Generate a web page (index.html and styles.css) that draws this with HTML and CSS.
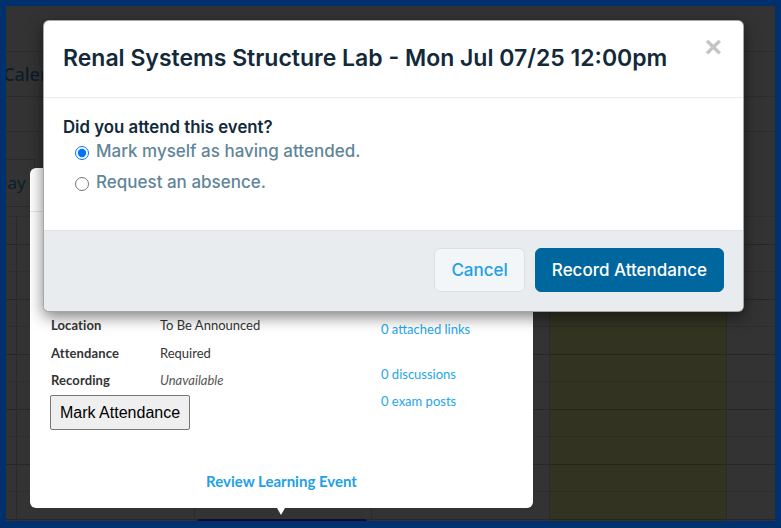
FILE: index.html
```html
<!DOCTYPE html>
<html lang="en">
<head>
    <meta charset="UTF-8">
    <meta name="viewport" content="width=device-width, initial-scale=1.0">
    <title>Calendar - Record Attendance</title>
    <link rel="stylesheet" href="styles.css">
</head>
<body>

<div class="page">
    <div class="cal">
        <div class="cal-nav"></div>
        <div class="cal-title"><h2>Calendar</h2></div>
        <div class="cal-sub"></div>
        <div class="cal-toolbar"><span class="view-btn">Day</span></div>
        <div class="cal-grid">
            <div class="col gutter"></div>
            <div class="col"></div>
            <div class="col"><div class="event"></div></div>
            <div class="col"></div>
            <div class="col today"></div>
            <div class="col"></div>
        </div>
    </div>

    <div class="popover">
        <div class="popover-title"></div>
        <div class="popover-body">
            <div class="details">
                <div class="info">
                    <span class="label">Course</span><span>Renal Systems</span>
                    <span class="label">Date</span><span>Mon Jul 07/25</span>
                    <span class="label">Time</span><span>12:00pm - 2:00pm</span>
                    <span class="label">Location</span><span>To Be Announced</span>
                    <span class="label">Attendance</span><span>Required</span>
                    <span class="label">Recording</span><span class="muted">Unavailable</span>
                </div>
                <button type="button" class="mark-btn">Mark Attendance</button>
            </div>
            <div class="links">
                <a href="#">0 resources</a>
                <a href="#">0 slides</a>
                <a href="#">0 attached files</a>
                <a href="#">0 attached links</a>
                <a href="#" class="gap">0 discussions</a>
                <a href="#">0 exam posts</a>
            </div>
        </div>
        <div class="popover-footer"><a href="#">Review Learning Event</a></div>
    </div>

    <div class="modal">
        <div class="modal-header">
            <h3>Renal Systems Structure Lab - Mon Jul 07/25 12:00pm</h3>
            <span class="close">&times;</span>
        </div>
        <div class="modal-body">
            <p class="question">Did you attend this event?</p>
            <label class="option"><input type="radio" name="attend" checked> Mark myself as having attended.</label>
            <label class="option"><input type="radio" name="attend"> Request an absence.</label>
        </div>
        <div class="modal-footer">
            <button type="button" class="btn btn-cancel">Cancel</button>
            <button type="button" class="btn btn-primary">Record Attendance</button>
        </div>
    </div>
</div>

</body>
</html>
```

FILE: styles.css
```css
html, body {
    margin: 0;
    height: 528px;
}
body {
    background-color: #00306e;
    padding: 6px 6px 7px 6px;
    box-sizing: border-box;
    font-family: Lato, sans-serif;
}
.page {
    position: relative;
    height: 515px;
    background-color: #333;
    overflow: hidden;
}

/* calendar behind the backdrop */
.cal-nav {
    height: 45px;
    border-bottom: 1px solid #2c2c2c;
}
.cal-title {
    height: 44px;
    border-bottom: 1px solid #2c2c2c;
    display: flex;
    align-items: center;
}
.cal-title h2 {
    margin: 0 0 0 -3px;
    font-family: "Noto Sans", sans-serif;
    font-size: 18px;
    font-weight: 500;
    color: #0b1d2a;
}
.cal-sub {
    height: 34px;
    border-bottom: 1px solid #2c2c2c;
}
.cal-toolbar {
    height: 84px;
    padding-top: 27px;
    box-sizing: border-box;
}
.view-btn {
    display: inline-block;
    margin-left: -16px;
    padding: 0 8px 0 4px;
    height: 46px;
    line-height: 46px;
    border: 1px solid #2a2a2a;
    font-family: "Noto Sans", sans-serif;
    font-size: 17px;
    color: #0b1d2a;
}
.cal-grid {
    display: grid;
    grid-template-columns: 10px repeat(4, 177.5px) 1fr;
    height: 320px;
}
.col {
    position: relative;
    border-left: 1px solid #2a2a2a;
    background-image: repeating-linear-gradient(to bottom,
        #2e2e2e 0, #2e2e2e 1px, transparent 1px, transparent 27.5px,
        #272727 27.5px, #272727 28.5px, transparent 28.5px, transparent 55px);
}
.col.gutter {
    border-left: none;
}
.col.today {
    background-color: #333322;
    background-image: repeating-linear-gradient(to bottom,
        #2d2d1f 0, #2d2d1f 1px, transparent 1px, transparent 27.5px,
        #26261a 27.5px, #26261a 28.5px, transparent 28.5px, transparent 55px);
}
.event {
    position: absolute;
    top: 303px;
    left: 2px;
    right: 4px;
    height: 40px;
    background-color: #0f0b33;
    border-radius: 3px;
}

/* event popover */
.popover {
    position: absolute;
    left: 24px;
    top: 162px;
    width: 503px;
    background-color: #fff;
    border-radius: 6px;
    color: #333;
    font-size: 13px;
}
.popover::after {
    content: "";
    position: absolute;
    left: 247px;
    bottom: -7px;
    border-left: 4px solid transparent;
    border-right: 4px solid transparent;
    border-top: 7px solid #fff;
}
.popover-title {
    height: 43px;
    border-bottom: 1px solid #e6e6e6;
}
.popover-body {
    display: grid;
    grid-template-columns: 330px 1fr;
    padding: 17px 21px 0 21px;
}
.info {
    display: grid;
    grid-template-columns: 109px 1fr;
    grid-auto-rows: 27.5px;
    align-items: center;
}
.info .label {
    font-weight: bold;
    letter-spacing: 0.1px;
}
.info .muted {
    font-style: italic;
    color: #555;
}
.mark-btn {
    margin: 1px 0 0 -1px;
    height: 35px;
    padding: 0 9px;
    font-family: Arial, "Liberation Sans", sans-serif;
    font-size: 16px;
    color: #000;
    background-color: #efefef;
    border: 1px solid #767676;
    border-radius: 2px;
}
.links {
    display: flex;
    flex-direction: column;
    align-items: flex-start;
    margin-top: 6px;
}
.links a {
    height: 27px;
    line-height: 27px;
    color: #22a6ea;
    text-decoration: none;
}
.links a.gap {
    margin-top: 18px;
}
.popover-footer {
    text-align: center;
    padding: 41px 0 16px 0;
    line-height: 20px;
}
.popover-footer a {
    color: #1da1e6;
    font-weight: bold;
    font-size: 15px;
    text-decoration: none;
}

/* attendance modal */
.modal {
    position: absolute;
    left: 37px;
    top: 14px;
    width: 701px;
    box-sizing: border-box;
    background-color: #fff;
    border: 1px solid rgba(0, 0, 0, 0.35);
    border-radius: 6px;
    box-shadow: 0 5px 15px rgba(0, 0, 0, 0.5);
    overflow: hidden;
    font-family: Inter, sans-serif;
}
.modal-header {
    display: flex;
    justify-content: space-between;
    align-items: flex-start;
    padding: 19px 21px 20px 19px;
    border-bottom: 1px solid #e9ecef;
}
.modal-header h3 {
    margin: 0;
    font-size: 23px;
    line-height: 37px;
    font-weight: 600;
    color: #12293a;
}
.close {
    margin-top: -8px;
    font-family: Arial, "Liberation Sans", sans-serif;
    font-size: 30px;
    font-weight: bold;
    line-height: 30px;
    color: #c4c4c4;
}
.modal-body {
    padding: 19px 19px 33px 19px;
}
.question {
    margin: 0 0 -2px 0;
    font-size: 16.8px;
    line-height: 20px;
    font-weight: 600;
    color: #12293a;
}
.option {
    display: flex;
    align-items: center;
    height: 31px;
    padding-left: 12px;
    font-size: 17px;
    font-weight: 500;
    color: #5f8698;
}
.option input {
    width: 14px;
    height: 14px;
    margin: 5px 7px 0 0;
}
.modal-footer {
    display: flex;
    justify-content: flex-end;
    gap: 10px;
    padding: 17px 19px 19px 19px;
    background-color: #e9ecef;
    border-top: 1px solid #dee2e6;
}
.btn {
    height: 44px;
    padding: 0 16px;
    border-radius: 6px;
    font-family: Inter, sans-serif;
    font-size: 17px;
    font-weight: 500;
}
.btn-cancel {
    background-color: #f3f6f9;
    border: 1px solid #d9dfe4;
    color: #1ea0e6;
}
.btn-primary {
    background-color: #00669e;
    border: 1px solid #00669e;
    color: #fff;
}
```
